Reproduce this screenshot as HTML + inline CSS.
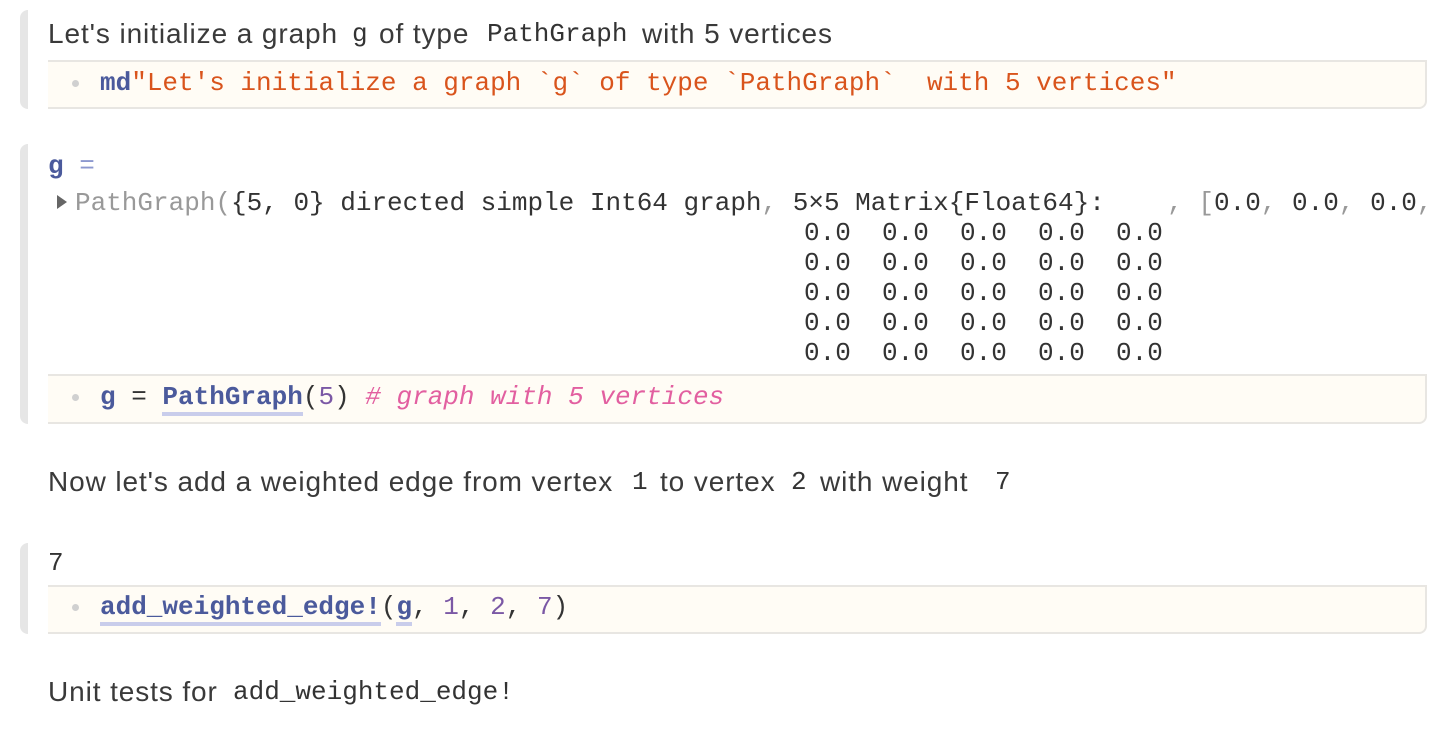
<!DOCTYPE html>
<html><head><meta charset="utf-8"><style>
body{margin:0;width:1456px;height:748px;background:#fff;position:relative;overflow:hidden;font-family:"Liberation Sans",sans-serif;color:#333}
.a{position:absolute;white-space:pre;line-height:30px}
.p{font-size:28px;color:#3a3a3a;letter-spacing:0.9px;top:0}
.m{font-family:"Liberation Mono",monospace;font-size:26px;color:#333}
.cell{position:absolute;left:20px;width:1407px;border-radius:8px}
.bar{position:absolute;left:0;top:0;bottom:0;width:8px;background:#e6e6e6;border-radius:8px 0 0 8px}
.code{position:absolute;left:28px;right:0;background:#fffcf5;border:2px solid #e8e6e2;border-left:none;border-radius:0 0 8px 0;box-sizing:border-box}
.dot{position:absolute;left:72px;width:7px;height:7px;border-radius:50%;background:#d0d0d0}
.b{color:#4b5a9c;font-weight:bold}
.s{color:#d9541c}
.c{color:#e25fa0;font-style:italic}
.n{color:#7b58a5}
.u{border-bottom:4px solid #c9cdeb}
.g{color:#999}
</style></head><body>
<div class="cell" style="top:10px;height:99px"><div class="bar"></div><div class="code" style="top:50px;bottom:0"></div></div>
<span class="a p" style="left:48px;top:19px">Let's initialize a graph</span>
<span class="a m" style="left:352px;top:19px">g</span>
<span class="a p" style="left:379px;top:19px">of type</span>
<span class="a m" style="left:487px;top:19px">PathGraph</span>
<span class="a p" style="left:642px;top:19px">with 5 vertices</span>
<div class="dot" style="top:80px"></div>
<span class="a m" style="left:100px;top:68px"><span class="b">md</span><span class="s">"Let's initialize a graph `g` of type `PathGraph`  with 5 vertices"</span></span>

<div class="cell" style="top:144px;height:280px"><div class="bar"></div><div class="code" style="top:230px;bottom:0"></div></div>
<span class="a m" style="left:48px;top:151px"><span class="b">g</span> <span style="color:#8c98cf">=</span></span>
<svg class="a" style="left:56px;top:194px" width="12" height="16"><path d="M1 1 L11 8 L1 15Z" fill="#666"/></svg>
<span class="a m" style="left:75px;top:188px"><span class="g">PathGraph(</span>{5, 0} directed simple Int64 graph<span class="g">,</span> 5×5 Matrix{Float64}:    <span class="g">, [</span>0.0<span class="g">,</span> 0.0<span class="g">,</span> 0.0<span class="g">,</span></span>
<span class="a m" style="left:804px;top:218px">0.0  0.0  0.0  0.0  0.0
0.0  0.0  0.0  0.0  0.0
0.0  0.0  0.0  0.0  0.0
0.0  0.0  0.0  0.0  0.0
0.0  0.0  0.0  0.0  0.0</span>
<div class="dot" style="top:394px"></div>
<span class="a m" style="left:100px;top:382px"><span class="b">g</span> = <span class="b u">PathGraph</span>(<span class="n">5</span>) <span class="c"># graph with 5 vertices</span></span>

<span class="a p" style="left:48px;top:467px">Now let's add a weighted edge from vertex</span>
<span class="a m" style="left:632px;top:467px">1</span>
<span class="a p" style="left:660px;top:467px">to vertex</span>
<span class="a m" style="left:791px;top:467px">2</span>
<span class="a p" style="left:820px;top:467px">with weight</span>
<span class="a m" style="left:995px;top:467px">7</span>

<div class="cell" style="top:543px;height:91px"><div class="bar"></div><div class="code" style="top:42px;bottom:0"></div></div>
<span class="a m" style="left:48px;top:548px">7</span>
<div class="dot" style="top:604px"></div>
<span class="a m" style="left:100px;top:592px"><span class="b u">add_weighted_edge!</span>(<span class="b u">g</span>, <span class="n">1</span>, <span class="n">2</span>, <span class="n">7</span>)</span>

<span class="a p" style="left:48px;top:677px">Unit tests for</span>
<span class="a m" style="left:233px;top:677px">add_weighted_edge!</span>
</body></html>
